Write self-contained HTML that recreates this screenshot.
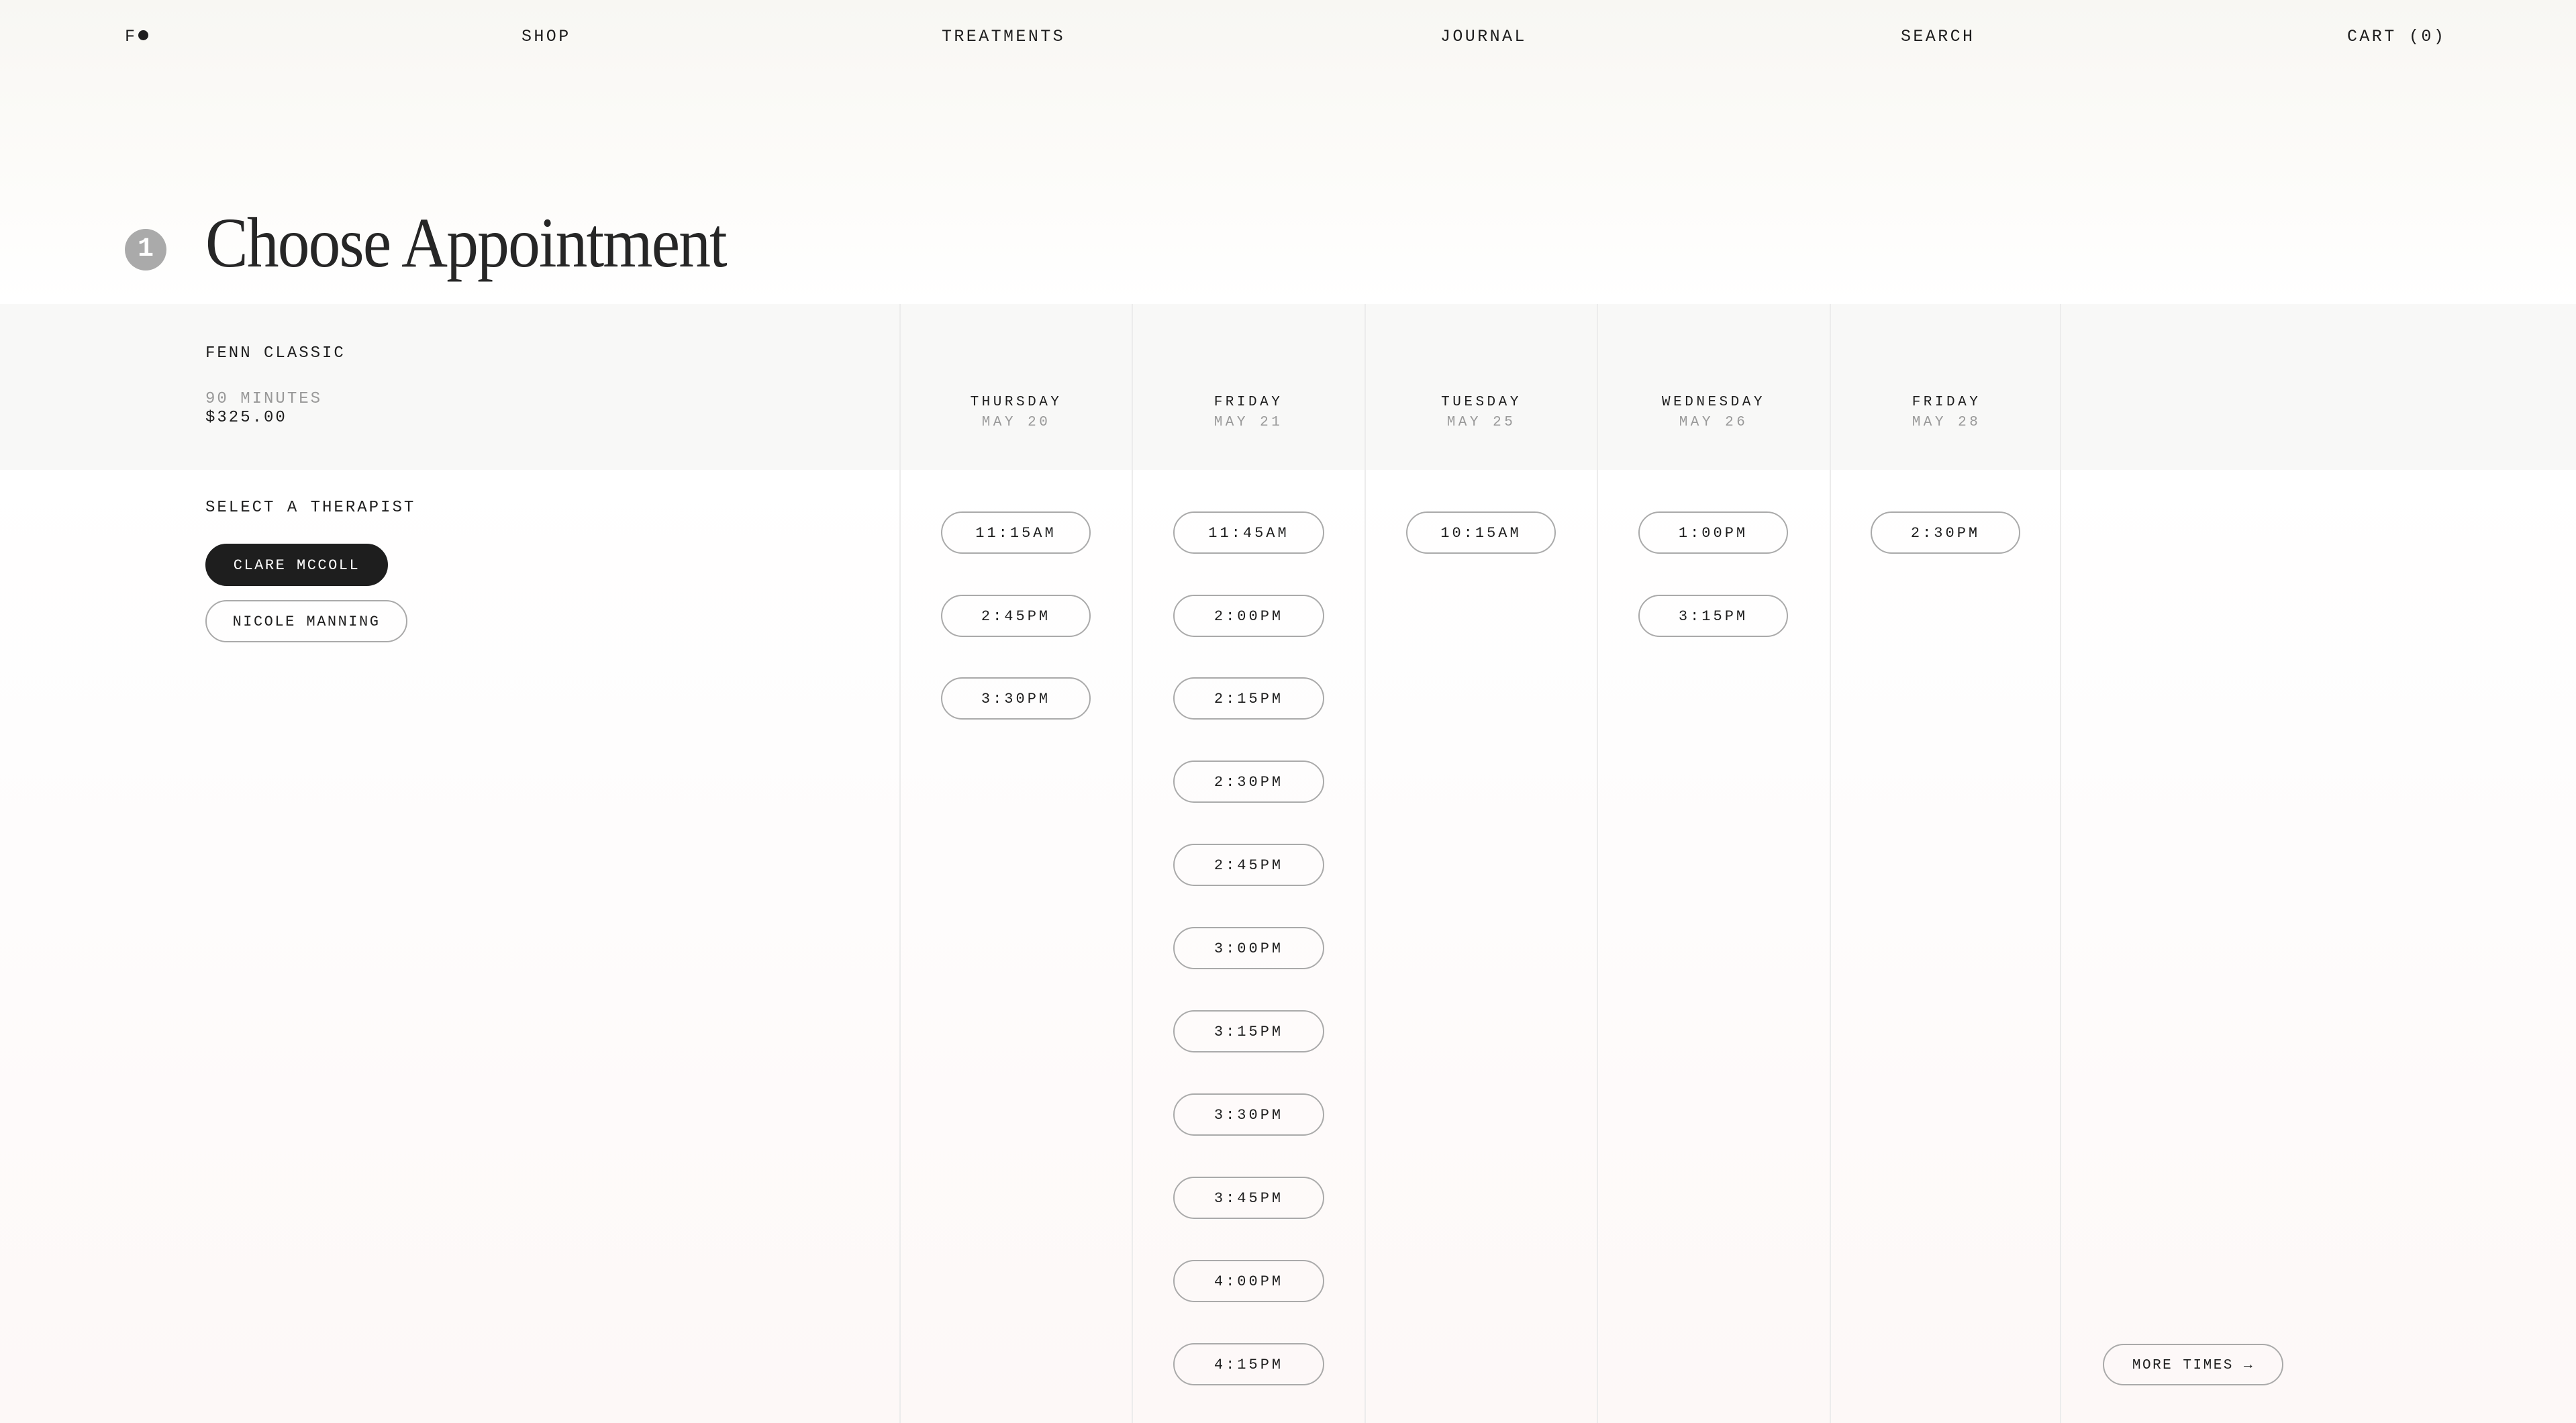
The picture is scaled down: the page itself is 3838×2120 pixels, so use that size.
<!DOCTYPE html>
<html><head><meta charset="utf-8"><style>
*{margin:0;padding:0;box-sizing:border-box}
body{width:3838px;height:2120px;position:relative;overflow:hidden;font-family:"Liberation Mono",monospace;color:#1e1e1e;
background:linear-gradient(#f8f7f3 0px,#fdfcfa 300px,#ffffff 450px,#ffffff 700px,#fefcfc 1300px,#fdf8f7 2120px)}
.a{position:absolute;white-space:nowrap}
.nav{font-size:25px;letter-spacing:3.4px;top:41px;line-height:28px}
.band{position:absolute;left:0;top:453px;width:3838px;height:247px;background:#f8f8f7}
.vl{position:absolute;top:453px;width:2px;height:1667px;background:#ececec}
.lbl{font-size:24px;letter-spacing:3px;line-height:28px}
.day{position:absolute;width:346px;text-align:center;font-size:21px;letter-spacing:4.5px;line-height:30px;top:585px}
.day span{color:#999;display:block}
.pill{position:absolute;height:63px;border:2px solid #aaa;border-radius:32px;display:flex;align-items:center;justify-content:center;font-size:22px;letter-spacing:4px;background:transparent;padding-top:2px}
</style></head><body>
<div class="a nav" style="left:186px">F<span style="display:inline-block;width:15px;height:15px;border-radius:50%;background:#1e1e1e;margin-left:2px;vertical-align:1px"></span></div>
<div class="a nav" style="left:777px">SHOP</div>
<div class="a nav" style="left:1403px">TREATMENTS</div>
<div class="a nav" style="left:2146px">JOURNAL</div>
<div class="a nav" style="left:2832px">SEARCH</div>
<div class="a nav" style="left:3497px">CART (0)</div>

<div class="a" style="left:186px;top:341px;width:62px;height:62px;border-radius:50%;background:#aaa;color:#fff;font-size:40px;line-height:62px;text-align:center;font-weight:bold">1</div>
<div class="a" style="left:306px;top:302px;font-family:'Liberation Serif',serif;font-size:106px;line-height:120px;letter-spacing:-2px;transform:scaleX(0.9);transform-origin:left top;color:#262626">Choose Appointment</div>

<div class="band"></div>
<div class="vl" style="left:1340px"></div>
<div class="vl" style="left:1686px"></div>
<div class="vl" style="left:2033px"></div>
<div class="vl" style="left:2379px"></div>
<div class="vl" style="left:2726px"></div>
<div class="vl" style="left:3069px"></div>

<div class="a lbl" style="left:306px;top:513px">FENN CLASSIC</div>
<div class="a lbl" style="left:306px;top:581px;color:#999">90 MINUTES</div>
<div class="a lbl" style="left:306px;top:609px">$325.00</div>
<div class="a lbl" style="left:306px;top:743px">SELECT A THERAPIST</div>
<div class="pill" style="left:306px;top:810px;width:272px;height:63px;background:#1e1e1e;border-color:#1e1e1e;color:#fff;font-size:22px;letter-spacing:2.5px">CLARE MCCOLL</div>
<div class="pill" style="left:306px;top:894px;width:301px;height:63px;font-size:22px;letter-spacing:2.5px">NICOLE MANNING</div>

<div class="day" style="left:1341px">THURSDAY<span>MAY 20</span></div>
<div class="day" style="left:1687px">FRIDAY<span>MAY 21</span></div>
<div class="day" style="left:2034px">TUESDAY<span>MAY 25</span></div>
<div class="day" style="left:2380px">WEDNESDAY<span>MAY 26</span></div>
<div class="day" style="left:2727px">FRIDAY<span>MAY 28</span></div>

<div class="pill" style="left:1402px;top:762px;width:223px">11:15AM</div>
<div class="pill" style="left:1402px;top:886px;width:223px">2:45PM</div>
<div class="pill" style="left:1402px;top:1009px;width:223px">3:30PM</div>

<div class="pill" style="left:1748px;top:762px;width:225px">11:45AM</div>
<div class="pill" style="left:1748px;top:886px;width:225px">2:00PM</div>
<div class="pill" style="left:1748px;top:1009px;width:225px">2:15PM</div>
<div class="pill" style="left:1748px;top:1133px;width:225px">2:30PM</div>
<div class="pill" style="left:1748px;top:1257px;width:225px">2:45PM</div>
<div class="pill" style="left:1748px;top:1381px;width:225px">3:00PM</div>
<div class="pill" style="left:1748px;top:1505px;width:225px">3:15PM</div>
<div class="pill" style="left:1748px;top:1629px;width:225px">3:30PM</div>
<div class="pill" style="left:1748px;top:1753px;width:225px">3:45PM</div>
<div class="pill" style="left:1748px;top:1877px;width:225px">4:00PM</div>
<div class="pill" style="left:1748px;top:2001px;width:225px">4:15PM</div>

<div class="pill" style="left:2095px;top:762px;width:223px">10:15AM</div>

<div class="pill" style="left:2441px;top:762px;width:223px">1:00PM</div>
<div class="pill" style="left:2441px;top:886px;width:223px">3:15PM</div>

<div class="pill" style="left:2787px;top:762px;width:223px">2:30PM</div>

<div class="pill" style="left:3133px;top:2002px;width:269px;height:62px;font-size:21px;letter-spacing:2.5px">MORE TIMES →</div>
</body></html>
